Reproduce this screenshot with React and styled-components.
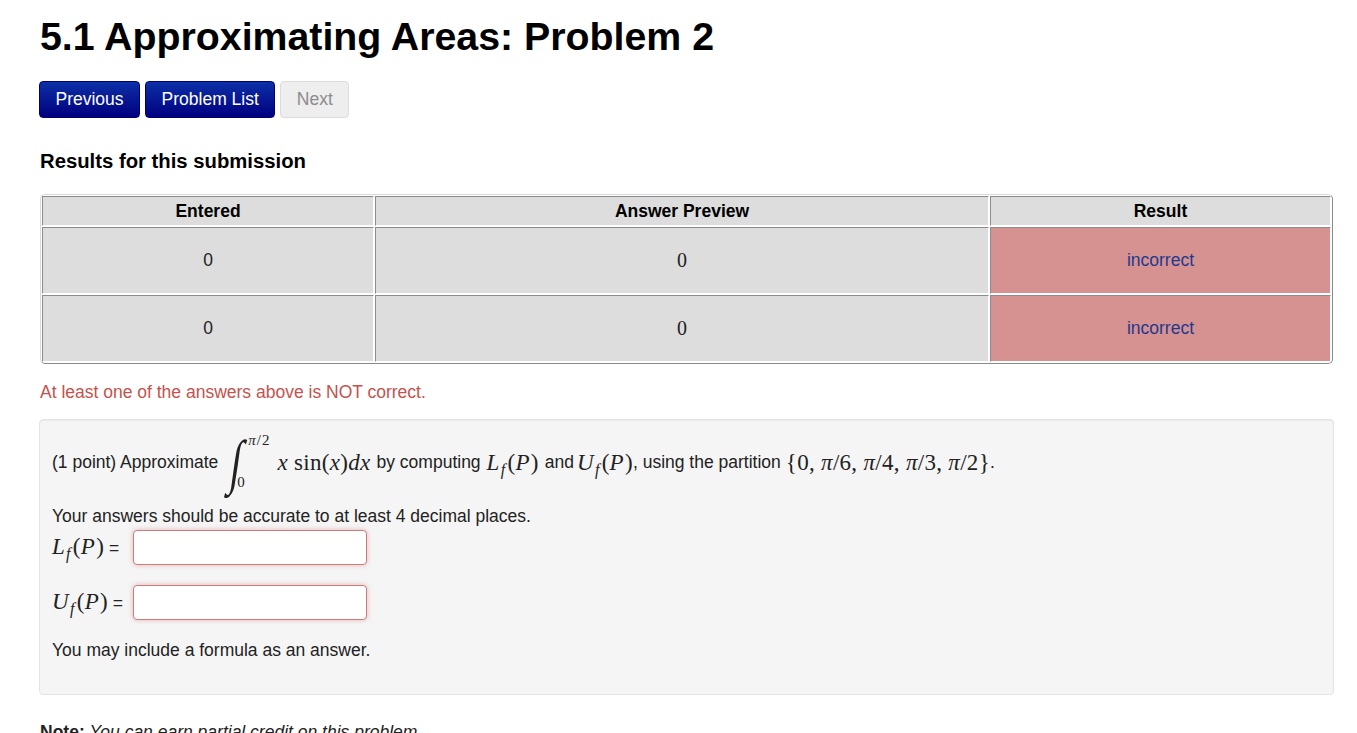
import React from "react";
import styled, { createGlobalStyle } from "styled-components";

const GlobalStyle = createGlobalStyle`
  body {
    margin: 0;
    background: #fff;
    font-family: "Liberation Sans", Arial, sans-serif;
    font-size: 17.5px;
    line-height: 25px;
    color: #222;
  }
`;

const Page = styled.div`
  padding: 14px 24px 0 40px;
  height: 733px;
  overflow: hidden;
  box-sizing: border-box;
`;

const Title = styled.h1`
  margin: 0;
  font-size: 39.3px;
  line-height: 44px;
  font-weight: bold;
  color: #000;
`;

const NavBar = styled.div`
  display: flex;
  gap: 5px;
  margin-top: 23px;
  margin-left: -1px;
`;

const NavButton = styled.button`
  font-family: "Liberation Sans", Arial, sans-serif;
  font-size: 17.5px;
  line-height: 25px;
  padding: 5px 15.5px;
  border-radius: 4px;
  cursor: ${(p) => (p.disabled ? "default" : "pointer")};
  color: ${(p) => (p.disabled ? "#8c8c8c" : "#fff")};
  border: 1px solid ${(p) => (p.disabled ? "#dcdcdc" : "#00006e")};
  background: ${(p) =>
    p.disabled ? "#eeeeee" : "linear-gradient(to bottom, #0c30a6 0%, #000080 100%)"};
`;

const SectionTitle = styled.h3`
  margin: 32px 0 0 0;
  font-size: 20.3px;
  line-height: 22px;
  font-weight: bold;
  color: #000;
`;

const ResultsTable = styled.table`
  margin-top: 22px;
  width: 1293px;
  border-collapse: separate;
  border-spacing: 1px;
  border: 1px solid;
  border-color: #dadada #8a8a8a #8a8a8a #dadada;
  border-radius: 5px;
  text-align: center;
`;

const HeadCell = styled.th`
  background: #dddddd;
  font-weight: bold;
  color: #000;
  padding: 2px 8px;
  line-height: 24px;
  border: 1px solid;
  border-color: #8c8c8c #fff #fff #8c8c8c;
  width: ${(p) => p.$w}px;
`;

const Cell = styled.td`
  background: ${(p) => (p.$bad ? "#d69191" : "#dddddd")};
  color: ${(p) => (p.$bad ? "#1d3a8f" : "#222")};
  font-family: ${(p) =>
    p.$math ? '"Liberation Serif", "DejaVu Serif", serif' : '"Liberation Sans", Arial, sans-serif'};
  font-size: ${(p) => (p.$math ? "20px" : "17.5px")};
  padding: 20px 8px;
  line-height: 25px;
  border: 1px solid;
  border-color: #8c8c8c #fff #fff #8c8c8c;
`;

const ErrorMessage = styled.div`
  margin-top: 16px;
  color: #c4524e;
`;

const Well = styled.div`
  margin-top: 14px;
  margin-left: -1px;
  width: 1269px;
  background: #f5f5f5;
  border: 1px solid #e3e3e3;
  border-radius: 4px;
  box-shadow: inset 0 1px 1px rgba(0, 0, 0, 0.05);
  padding: 11px 12px 31px 12px;
`;

const ProblemLine = styled.div`
  display: flex;
  align-items: center;
  height: 62px;
  white-space: pre;
`;

const Math = styled.span`
  font-family: "Liberation Serif", "DejaVu Serif", serif;
  font-size: 23px;
  letter-spacing: 0.3px;
  margin: 0 ${(p) => (p.$right !== undefined ? p.$right : 5)}px 0 ${(p) => (p.$left !== undefined ? p.$left : 5)}px;
  display: inline-block;
  white-space: pre;
`;

const Var = styled.i`
  font-style: italic;
  padding-right: ${(p) => p.$pad || 0}px;
`;

const Sub = styled.span`
  display: inline-block;
  font-size: 16px;
  font-style: italic;
  vertical-align: -5px;
  line-height: 0;
  margin: 0 2px 0 1px;
`;

const Thin = styled.span`
  display: inline-block;
  width: ${(p) => p.$w}px;
`;

const IntegralWrap = styled.span`
  display: inline-flex;
  align-items: stretch;
  height: 60px;
  margin: 0 3px 0 13px;
  font-family: "Liberation Serif", "DejaVu Serif", serif;
`;

const IntegralSign = styled.span`
  font-size: 40px;
  line-height: 60px;
  display: inline-block;
  transform: scaleY(1.5) skewX(-12deg);
  transform-origin: center;
`;

const Limits = styled.span`
  display: flex;
  flex-direction: column;
  justify-content: space-between;
  font-size: 15px;
  line-height: 15px;
  margin-left: 4px;
  padding: 1px 0 2px 0;
`;

const UpperLimit = styled.span`
  margin-left: 2px;
  letter-spacing: 1px;
`;

const LowerLimit = styled.span`
  margin-left: -9px;
`;

const Para = styled.div`
  margin-top: ${(p) => p.$mt || 0}px;
`;

const AnswerRow = styled.div`
  display: flex;
  align-items: center;
  height: 35px;
  margin-top: ${(p) => p.$mt}px;
`;

const AnswerLabel = styled.span`
  display: inline-flex;
  align-items: baseline;
  min-width: 81px;
  white-space: pre;
`;

const AnswerInput = styled.input`
  width: 234px;
  height: 35px;
  box-sizing: border-box;
  border: 1px solid #cf7b7b;
  border-radius: 4px;
  background: #fff;
  box-shadow: 0 0 5px rgba(214, 130, 130, 0.55);
  padding: 4px 8px;
  font-size: 17.5px;
  outline: none;
`;

const Note = styled.div`
  margin-top: 25px;
`;

const LF = () => (
  <>
    <Var>L</Var>
    <Sub>f</Sub>
    <span>(</span>
    <Var $pad={1}>P</Var>
    <span>)</span>
  </>
);

const UF = () => (
  <>
    <Var>U</Var>
    <Sub>f</Sub>
    <span>(</span>
    <Var $pad={1}>P</Var>
    <span>)</span>
  </>
);

const Pi = () => <Var>π</Var>;

const rows = [
  { entered: "0", preview: "0", result: "incorrect" },
  { entered: "0", preview: "0", result: "incorrect" },
];

export default function App() {
  return (
    <>
      <GlobalStyle />
      <Page>
        <Title>5.1 Approximating Areas: Problem 2</Title>
        <NavBar>
          <NavButton>Previous</NavButton>
          <NavButton>Problem List</NavButton>
          <NavButton disabled>Next</NavButton>
        </NavBar>

        <SectionTitle>Results for this submission</SectionTitle>
        <ResultsTable>
          <thead>
            <tr>
              <HeadCell $w={315}>Entered</HeadCell>
              <HeadCell $w={598}>Answer Preview</HeadCell>
              <HeadCell $w={324}>Result</HeadCell>
            </tr>
          </thead>
          <tbody>
            {rows.map((r, i) => (
              <tr key={i}>
                <Cell>{r.entered}</Cell>
                <Cell $math>{r.preview}</Cell>
                <Cell $bad>{r.result}</Cell>
              </tr>
            ))}
          </tbody>
        </ResultsTable>

        <ErrorMessage>At least one of the answers above is NOT correct.</ErrorMessage>

        <Well>
          <ProblemLine>
            <span>(1 point) Approximate</span>
            <IntegralWrap>
              <IntegralSign>∫</IntegralSign>
              <Limits>
                <UpperLimit>
                  <Pi />/2
                </UpperLimit>
                <LowerLimit>0</LowerLimit>
              </Limits>
            </IntegralWrap>
            <Math $left={4} $right={6}>
              <Var>x</Var>
              <Thin $w={6} />
              <span>sin(</span>
              <Var>x</Var>
              <span>)</span>
              <Var>dx</Var>
            </Math>
            <span>by computing</span>
            <Math $left={6} $right={6}>
              <LF />
            </Math>
            <span>and</span>
            <Math $left={3} $right={0}>
              <UF />
            </Math>
            <span>, using the partition</span>
            <Math $left={5} $right={0}>
              <span>{"{0, "}</span>
              <Pi />
              <span>{"/6, "}</span>
              <Pi />
              <span>{"/4, "}</span>
              <Pi />
              <span>{"/3, "}</span>
              <Pi />
              <span>{"/2}"}</span>
            </Math>
            <span>.</span>
          </ProblemLine>

          <Para $mt={11}>Your answers should be accurate to at least 4 decimal places.</Para>
          <AnswerRow $mt={1}>
            <AnswerLabel>
              <Math $left={0} $right={0}>
                <LF />
              </Math>
              <span> =</span>
            </AnswerLabel>
            <AnswerInput type="text" />
          </AnswerRow>
          <AnswerRow $mt={20}>
            <AnswerLabel>
              <Math $left={0} $right={0}>
                <UF />
              </Math>
              <span> =</span>
            </AnswerLabel>
            <AnswerInput type="text" />
          </AnswerRow>
          <Para $mt={18}>You may include a formula as an answer.</Para>
        </Well>

        <Note>
          <b>Note:</b> <i>You can earn partial credit on this problem.</i>
        </Note>
      </Page>
    </>
  );
}
